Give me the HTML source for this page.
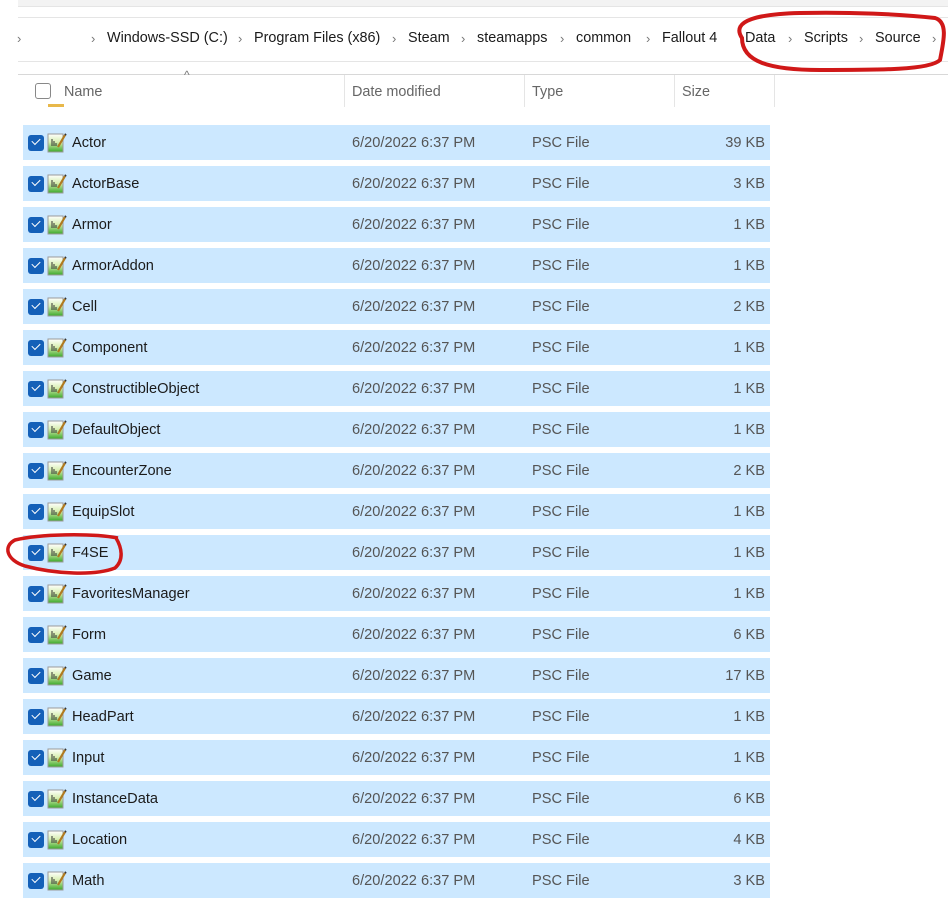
<!DOCTYPE html>
<html><head><meta charset="utf-8"><style>
body{margin:0;width:948px;height:906px;background:#fff;position:relative;overflow:hidden;font-family:"Segoe UI","Liberation Sans",sans-serif;color:#1b1b1b}
.top{position:absolute;left:18px;top:0;width:930px;height:6px;background:#f3f3f3;border-bottom:1px solid #e5e5e5}
.bc{position:absolute;left:18px;top:17px;width:930px;height:43px;border-top:1px solid #e5e5e5;border-bottom:1px solid #e5e5e5}
.t{position:absolute;font-size:14.4px;white-space:nowrap}
.ch{position:absolute;font-size:13px;color:#777}
.hdr{position:absolute;left:18px;top:74px;width:930px;border-top:1px solid #d8d8d8}
.sep{position:absolute;top:75px;height:32px;border-left:1px solid #e5e5e5}
.h{position:absolute;top:84px;font-size:14.4px;color:#666}
.row{position:absolute;left:23px;width:747px;height:35px;background:#cce8ff}
.row .cb{position:absolute;left:5px;top:10px;width:16px;height:16px;background:#1460b8;border-radius:3px}
.row .cb:after{content:"";position:absolute;left:4px;top:3px;width:7px;height:4px;border-left:1.5px solid #fff;border-bottom:1.5px solid #fff;transform:rotate(-45deg)}
.row .ic{position:absolute;left:24px;top:7px}
.row span{position:absolute;top:10px;font-size:14.6px;color:#555}
.row .n{left:49px;color:#1b1b1b}
.row .d{left:329px}.row .ty{left:509px}.row .s{right:5px}
</style></head><body>
<div class="top"></div>
<div class="bc"></div>
<span class="ch" style="left:17px;top:31px">›</span>
<span class="ch" style="left:91px;top:31px">›</span>
<span class="t" style="left:107px;top:30px">Windows-SSD (C:)</span>
<span class="ch" style="left:238px;top:31px">›</span>
<span class="t" style="left:254px;top:30px">Program Files (x86)</span>
<span class="ch" style="left:392px;top:31px">›</span>
<span class="t" style="left:408px;top:30px">Steam</span>
<span class="ch" style="left:461px;top:31px">›</span>
<span class="t" style="left:477px;top:30px">steamapps</span>
<span class="ch" style="left:560px;top:31px">›</span>
<span class="t" style="left:576px;top:30px">common</span>
<span class="ch" style="left:646px;top:31px">›</span>
<span class="t" style="left:662px;top:30px">Fallout 4</span>
<span class="t" style="left:745px;top:30px">Data</span>
<span class="ch" style="left:788px;top:31px">›</span>
<span class="t" style="left:804px;top:30px">Scripts</span>
<span class="ch" style="left:859px;top:31px">›</span>
<span class="t" style="left:875px;top:30px">Source</span>
<span class="ch" style="left:932px;top:31px">›</span>
<div class="hdr"></div>
<span class="ch" style="left:184px;top:68px;font-size:12px">^</span>
<div style="position:absolute;left:35px;top:83px;width:14px;height:14px;border:1px solid #888;border-radius:3px;background:#fff"></div>
<span class="h" style="left:64px">Name</span>
<span class="h" style="left:352px">Date modified</span>
<span class="h" style="left:532px">Type</span>
<span class="h" style="left:682px">Size</span>
<div class="sep" style="left:344px"></div><div class="sep" style="left:524px"></div><div class="sep" style="left:674px"></div><div class="sep" style="left:774px"></div>
<div style="position:absolute;left:48px;top:104px;width:16px;height:3px;background:#e8b84a"></div>
<div id="rows"></div>
<script>
var d=[["Actor",39],["ActorBase",3],["Armor",1],["ArmorAddon",1],["Cell",2],["Component",1],["ConstructibleObject",1],["DefaultObject",1],["EncounterZone",2],["EquipSlot",1],["F4SE",1],["FavoritesManager",1],["Form",6],["Game",17],["HeadPart",1],["Input",1],["InstanceData",6],["Location",4],["Math",3]];
var ic='<svg class="ic" width="20" height="21" viewBox="0 0 20 21"><defs><linearGradient id="g" x1="0" y1="0" x2="0" y2="1"><stop offset="0" stop-color="#fff"/><stop offset="0.45" stop-color="#d8efb0"/><stop offset="1" stop-color="#3aa82a"/></linearGradient></defs><rect x="1" y="2" width="15" height="18" fill="url(#g)" stroke="#9a9a9a"/><path d="M5 7v7M7 9v5M9 11v3" stroke="#333" stroke-width="1"/><path d="M11 15L18 3" stroke="#b07a20" stroke-width="2.2"/><path d="M18 3l1-1" stroke="#333" stroke-width="2"/></svg>';
var h="";d.forEach(function(r,i){h+='<div class="row" style="top:'+(125+41*i)+'px"><div class="cb"></div>'+ic+'<span class="n">'+r[0]+'</span><span class="d">6/20/2022 6:37 PM</span><span class="ty">PSC File</span><span class="s">'+r[1]+' KB</span></div>';});
document.getElementById("rows").innerHTML=h;
</script>
<svg style="position:absolute;left:0;top:0" width="948" height="906">
<path d="M742 38C730 20 760 14 800 13C850 12 900 14 935 18C948 22 944 40 940 60C930 70 880 70 820 70C770 70 742 62 742 38Z" fill="none" stroke="#d01818" stroke-width="4"/>
<path d="M118 538C90 533 40 534 15 540C3 546 6 560 25 566C55 574 95 576 115 568C124 560 122 548 116 538" fill="none" stroke="#d01818" stroke-width="3.5"/>
</svg>
</body></html>
